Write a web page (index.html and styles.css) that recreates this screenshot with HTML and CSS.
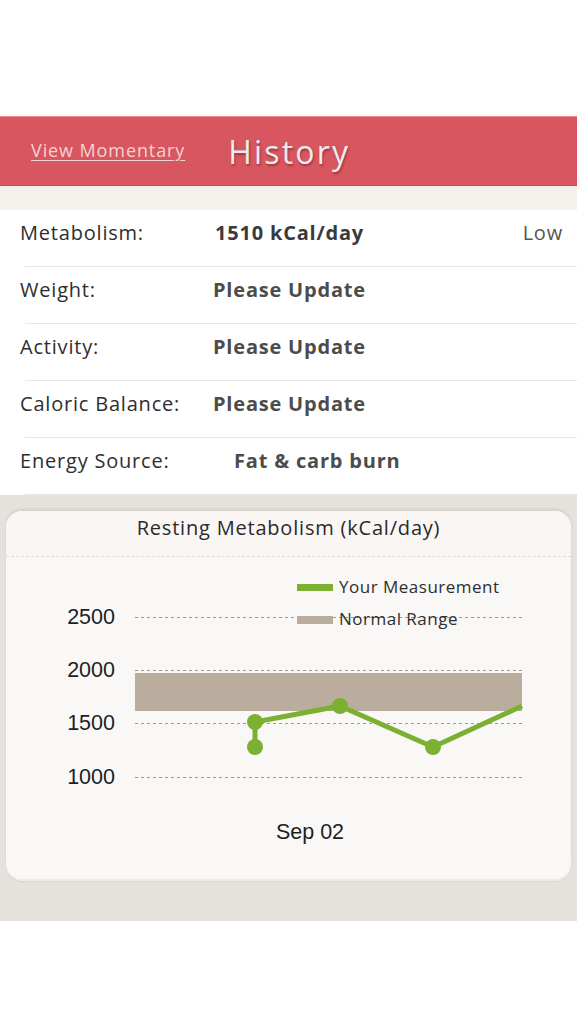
FILE: index.html
```html
<!DOCTYPE html>
<html>
<head>
<meta charset="utf-8">
<link rel="stylesheet" href="styles.css">
</head>
<body>
<div class="top-space"></div>
<header class="header">
  <a class="link">View Momentary</a>
  <h1 class="title">History</h1>
</header>
<div class="strip"></div>
<section class="list">
  <div class="row"><span class="label">Metabolism:</span><span class="value v1">1510 kCal/day</span><span class="note">Low</span></div>
  <div class="row"><span class="label">Weight:</span><span class="value">Please Update</span></div>
  <div class="row"><span class="label">Activity:</span><span class="value">Please Update</span></div>
  <div class="row"><span class="label">Caloric Balance:</span><span class="value">Please Update</span></div>
  <div class="row"><span class="label">Energy Source:</span><span class="value v5">Fat &amp; carb burn</span></div>
</section>
<section class="bottom">
  <div class="card">
    <div class="card-head">Resting Metabolism (kCal/day)</div>
    <svg class="chart" width="565" height="321" viewBox="0 0 565 321">
      <g stroke="#9a9a9a" stroke-width="1" stroke-dasharray="3 3">
        <line x1="129" y1="60.5" x2="516" y2="60.5"/>
        <line x1="129" y1="113.5" x2="516" y2="113.5"/>
        <line x1="129" y1="166.5" x2="516" y2="166.5"/>
        <line x1="129" y1="220.5" x2="516" y2="220.5"/>
      </g>
      <rect x="129" y="116" width="387" height="38" fill="#baad9d"/>
      <rect x="291" y="27" width="36" height="7" fill="#7cb033"/>
      <rect x="291" y="59" width="36" height="8" fill="#baad9d"/>
      <g class="legend">
        <text x="333" y="36">Your Measurement</text>
        <text x="333" y="68">Normal Range</text>
      </g>
      <g class="axis" text-anchor="end">
        <text x="109" y="67">2500</text>
        <text x="109" y="120">2000</text>
        <text x="109" y="173">1500</text>
        <text x="109" y="227">1000</text>
      </g>
      <polyline points="249,190 249,165 334,149 427,190 516,149" fill="none" stroke="#7cb033" stroke-width="5" stroke-linejoin="round"/>
      <g fill="#7cb033">
        <circle cx="249" cy="190" r="8"/>
        <circle cx="249" cy="165" r="8"/>
        <circle cx="334" cy="149" r="8"/>
        <circle cx="427" cy="190" r="8"/>
      </g>
      <text class="axis" x="304" y="282" text-anchor="middle">Sep 02</text>
    </svg>
  </div>
</section>
</body>
</html>
```

FILE: styles.css
```css
html, body {
  margin: 0;
  padding: 0;
  background: #ffffff;
}
body {
  width: 577px;
  font-family: "Open Sans", "Noto Sans", sans-serif;
}
.top-space {
  height: 116px;
  background: #ffffff;
}
.header {
  height: 69px;
  background: #d8565f;
  border-top: 1px solid #ec8a90;
  display: flex;
  align-items: center;
  padding-left: 31px;
  box-shadow: inset 0 -1px 0 #c04a53;
}
.link {
  color: #f2d3d5;
  font-size: 18px;
  letter-spacing: 0.9px;
  text-decoration: underline;
  text-underline-offset: 3px;
  text-decoration-thickness: 1px;
  margin-top: -3px;
}
.title {
  margin: 0 0 0 43px;
  font-weight: 400;
  font-size: 32px;
  letter-spacing: 2.2px;
  color: #ececec;
  text-shadow: 1px 2px 2px rgba(120, 30, 36, 0.55);
}
.strip {
  height: 24px;
  background: #f4f1ec;
}
.list {
  background: #ffffff;
}
.row {
  height: 56px;
  margin-left: 25px;
  border-bottom: 1px solid #e6e6e6;
  display: flex;
  align-items: flex-start;
}
.row > span {
  line-height: 26px;
  padding-top: 10px;
  font-size: 20px;
  letter-spacing: 0.8px;
}
.label {
  margin-left: -5px;
  width: 193px;
  color: #2e2e2e;
}
.value {
  color: #4c4c4c;
  font-weight: 700;
}
.v1 {
  margin-left: 2px;
  color: #3a3a3a;
  letter-spacing: 0.95px;
}
.v5 {
  margin-left: 21px;
}
.note {
  margin-left: auto;
  margin-right: 14px;
  color: #555555;
}
.bottom {
  background: #e5e1dc;
  padding: 16px 6px 42px 6px;
}
.card {
  background: #f9f8f6;
  border-radius: 16px;
  height: 368px;
  overflow: hidden;
  box-shadow: 0 -2px 3px rgba(0,0,0,0.08), 0 2px 0 #efece8, 0 3px 0 #d9d5cf;
}
.card-head {
  height: 45px;
  background: #faf6f4;
  border-bottom: 1px dashed #e3dcd8;
  text-align: center;
  font-size: 20px;
  letter-spacing: 0.8px;
  line-height: 34px;
  color: #2a2a2a;
}
.chart {
  display: block;
}
.legend text {
  font-family: "Open Sans", sans-serif;
  font-size: 17px;
  letter-spacing: 0.5px;
  fill: #2e2e2e;
}
.axis, .axis text {
  font-family: "Liberation Sans", Arial, sans-serif;
  font-size: 21.5px;
  fill: #1e1e1e;
}
```
